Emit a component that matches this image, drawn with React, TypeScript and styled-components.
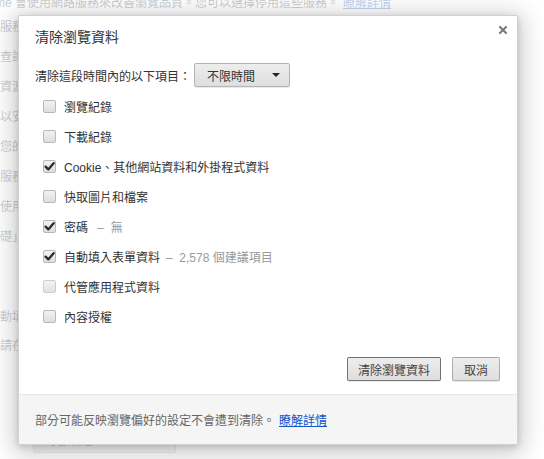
import React from "react";
import styled, { createGlobalStyle } from "styled-components";

const GlobalStyle = createGlobalStyle`
  * { box-sizing: border-box; }
  html, body { margin: 0; padding: 0; background: #fff; }
  body {
    font-family: "Liberation Sans", "Noto Sans CJK TC", sans-serif;
    font-size: 12px;
    color: #303942;
    overflow: hidden;
  }
`;

const Page = styled.div`
  position: relative;
  width: 544px;
  height: 459px;
  overflow: hidden;
`;

const PageLine = styled.div<{ $mt?: number; $lh?: number }>`
  margin-top: ${(p) => p.$mt ?? 0}px;
  line-height: ${(p) => p.$lh ?? 30}px;
  height: ${(p) => p.$lh ?? 30}px;
  white-space: nowrap;
  font-size: 12px;
  color: #303942;
`;

const TopLine = styled(PageLine)`
  text-indent: -31px;
`;

const PageLink = styled.a`
  color: #15c;
  text-decoration: underline;
  margin-left: 4px;
`;

const PageButton = styled.div`
  margin: 0 0 0 33px;
  width: 143px;
  height: 24px;
  border: 1px solid #b4b4b4;
  border-radius: 2px;
  background: linear-gradient(#ededed, #dedede);
  font-size: 12px;
  line-height: 22px;
  padding-left: 10px;
`;

const Overlay = styled.div`
  position: absolute;
  inset: 0;
  background: rgba(255, 255, 255, 0.75);
`;

const Dialog = styled.div`
  position: absolute;
  left: 18px;
  top: 15px;
  width: 500px;
  height: 430px;
  background: #fff;
  border: 1px solid rgba(0, 0, 0, 0.18);
  border-radius: 2px;
  box-shadow: 0 4px 23px 5px rgba(0, 0, 0, 0.2), 0 2px 6px rgba(0, 0, 0, 0.15);
  display: flex;
  flex-direction: column;
`;

const CloseButton = styled.div`
  position: absolute;
  top: 10px;
  right: 10px;
  width: 8px;
  height: 8px;
  display: flex;
`;

const Body = styled.div`
  flex: 1;
  padding: 13px 17px 13px 16px;
  display: flex;
  flex-direction: column;
`;

const Title = styled.div`
  font-size: 14px;
  line-height: 16px;
  color: #333;
`;

const TimeRow = styled.div`
  margin-top: 18px;
  height: 24px;
  display: flex;
  align-items: center;
  color: #333;
  font-size: 12px;
`;

const Select = styled.div`
  margin-left: 3px;
  width: 96px;
  height: 24px;
  border: 1px solid #b4b4b4;
  border-radius: 2px;
  background: linear-gradient(#ededed, #dedede);
  box-shadow: 0 1px 0 rgba(0, 0, 0, 0.08);
  display: flex;
  align-items: center;
  justify-content: space-between;
  padding: 0 9px 0 12px;
  color: #333;
  font-size: 12px;
`;

const Arrow = styled.div`
  width: 0;
  height: 0;
  border-left: 4px solid transparent;
  border-right: 4px solid transparent;
  border-top: 4px solid #222;
`;

const List = styled.div`
  margin-top: 4px;
  display: flex;
  flex-direction: column;
`;

const Row = styled.div`
  height: 30px;
  display: flex;
  align-items: center;
  padding-left: 8px;
  gap: 8px;
  font-size: 12px;
  color: #333;
`;

const Box = styled.div<{ $faded?: boolean }>`
  width: 13px;
  height: 13px;
  border: 1px solid ${(p) => (p.$faded ? "#c8c8c8" : "#b8b8b8")};
  border-radius: 2px;
  background: linear-gradient(#f2f2f2, #dedede);
  display: flex;
  align-items: center;
  justify-content: center;
  opacity: ${(p) => (p.$faded ? 0.9 : 1)};
`;

const Secondary = styled.span`
  color: #999;
  margin-left: 6px;
  white-space: pre;
`;

const Buttons = styled.div`
  margin-top: 26px;
  display: flex;
  justify-content: flex-end;
  gap: 11px;
`;

const Button = styled.div<{ $default?: boolean }>`
  height: 24px;
  min-width: 48px;
  padding: 0 10px;
  border: 1px solid ${(p) => (p.$default ? "rgba(0,0,0,0.5)" : "rgba(0,0,0,0.25)")};
  border-radius: 2px;
  background: linear-gradient(#ededed, #dedede);
  box-shadow: 0 1px 0 rgba(0, 0, 0, 0.08);
  display: flex;
  align-items: center;
  justify-content: center;
  font-size: 12px;
  color: #444;
`;

const Footer = styled.div`
  height: 50px;
  background: #f5f5f5;
  border-top: 1px solid #e7e7e7;
  padding: 0 16px;
  display: flex;
  align-items: center;
  font-size: 12px;
  color: #666;
`;

const FooterLink = styled.a`
  color: #15c;
  text-decoration: underline;
  margin-left: 4px;
`;

const Check = () => (
  <svg width="11" height="11" viewBox="0 0 11 11">
    <path d="M1.6 5.6 L4.3 8.4 L9.6 2.2" fill="none" stroke="#2b2b2b" strokeWidth="2.3" strokeLinecap="round" strokeLinejoin="round" />
  </svg>
);

const items: { label: string; checked: boolean; extra?: string; faded?: boolean }[] = [
  { label: "瀏覽紀錄", checked: false },
  { label: "下載紀錄", checked: false },
  { label: "Cookie、其他網站資料和外掛程式資料", checked: true },
  { label: "快取圖片和檔案", checked: false },
  { label: "密碼", checked: true, extra: " –  無" },
  { label: "自動填入表單資料", checked: true, extra: "–  2,578 個建議項目" },
  { label: "代管應用程式資料", checked: false, faded: true },
  { label: "內容授權", checked: false },
];

const sideLines = ["服務", "查詢", "資源", "以安", "您的", "服務", "使用", "礎」"];

export default function App() {
  return (
    <>
      <GlobalStyle />
      <Page>
        <TopLine $mt={-6} $lh={18}>
          Chrome 會使用網路服務來改善瀏覽品質。您可以選擇停用這些服務。
          <PageLink>瞭解詳情</PageLink>
        </TopLine>
        {sideLines.map((t, i) => (
          <PageLine key={i}>{t}</PageLine>
        ))}
        <PageLine $mt={50}>動填</PageLine>
        <PageLine $lh={28}>請在</PageLine>
        <PageLine $mt={69}>
          <PageButton>內容設定...</PageButton>
        </PageLine>
        <Overlay />
        <Dialog>
          <CloseButton>
            <svg width="8" height="8" viewBox="0 0 8 8">
              <path d="M1 1 L7 7 M7 1 L1 7" stroke="#777" strokeWidth="2" strokeLinecap="square" />
            </svg>
          </CloseButton>
          <Body>
            <Title>清除瀏覽資料</Title>
            <TimeRow>
              清除這段時間內的以下項目：
              <Select>
                不限時間
                <Arrow />
              </Select>
            </TimeRow>
            <List>
              {items.map((it) => (
                <Row key={it.label}>
                  <Box $faded={it.faded}>{it.checked && <Check />}</Box>
                  <span>
                    {it.label}
                    {it.extra && <Secondary>{it.extra}</Secondary>}
                  </span>
                </Row>
              ))}
            </List>
            <Buttons>
              <Button $default>清除瀏覽資料</Button>
              <Button>取消</Button>
            </Buttons>
          </Body>
          <Footer>
            部分可能反映瀏覽偏好的設定不會遭到清除。
            <FooterLink>瞭解詳情</FooterLink>
          </Footer>
        </Dialog>
      </Page>
    </>
  );
}
